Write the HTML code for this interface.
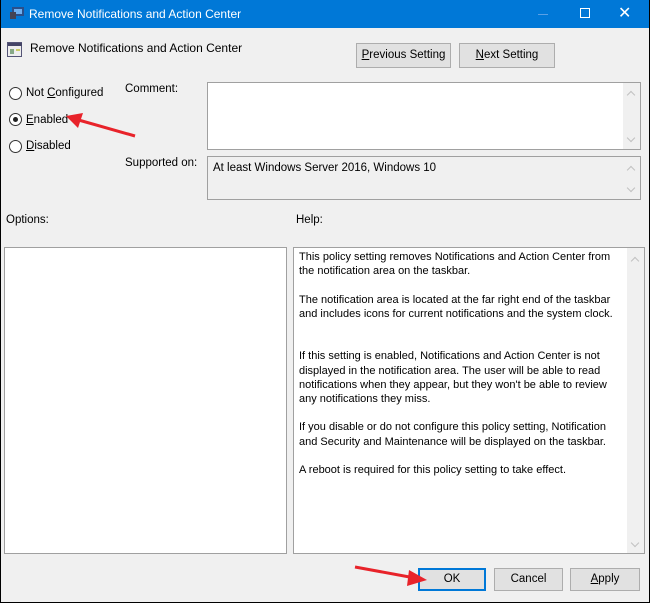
<!DOCTYPE html>
<html><head><style>
*{margin:0;padding:0;box-sizing:border-box}
body{width:650px;height:603px;background:#000;font-family:"Liberation Sans",sans-serif;font-size:11.5px;color:#000;position:relative;overflow:hidden}
.win{position:absolute;left:1px;top:0;width:648px;height:602px;background:#f0f0f0}
.title{position:absolute;left:0;top:0;width:648px;height:28px;background:#0078d7;color:#fff}
.a{position:absolute;white-space:nowrap}
.btn{position:absolute;background:#e1e1e1;border:1px solid #adadad;text-align:center;line-height:23px}
.box{position:absolute;background:#fff;border:1px solid #a0a0a0}
.ro{background:#f0f0f0}
.sb{position:absolute;right:0;top:0;bottom:0;width:17px;background:#f0f0f0}
.up,.dn{position:absolute;left:5px;width:6px;height:6px;border-left:1px solid #c0c0c0;border-top:1px solid #c0c0c0}
.up{transform:rotate(45deg)}
.dn{transform:rotate(225deg)}
.radio{position:absolute;width:13px;height:13px;border:1px solid #333;border-radius:50%;background:#fff}
u{text-decoration:underline}
</style></head><body>
<div class="win">
<div class="title">
 <svg class="a" style="left:8px;top:6px" width="16" height="14"><rect x="3" y="1" width="12" height="9" fill="#2b4f8a"/><rect x="5" y="3" width="8" height="5" fill="#6fb0f0"/><rect x="1" y="6" width="6" height="7" fill="#445"/></svg>
 <div class="a" style="left:28px;top:7px;font-size:12px">Remove Notifications and Action Center</div>
 <div class="a" style="left:537px;top:14px;width:10px;height:1px;background:#5aa0e6"></div>
 <div class="a" style="left:579px;top:8px;width:10px;height:10px;border:1px solid #fff"></div>
 <div class="a" style="left:617px;top:3px;font-size:16px">✕</div>
</div>
<svg class="a" style="left:6px;top:42px" width="16" height="16"><rect x="0.5" y="0.5" width="14" height="14" fill="#eee" stroke="#557"/><rect x="1" y="1" width="14" height="3" fill="#446"/><rect x="3" y="7" width="4" height="5" fill="#8a8"/><rect x="9" y="7" width="4" height="2" fill="#cc6"/></svg>
<div class="a" style="left:29px;top:41px;font-size:12px">Remove Notifications and Action Center</div>
<div class="btn" style="left:355px;top:43px;width:95px;height:25px"><u>P</u>revious Setting</div>
<div class="btn" style="left:458px;top:43px;width:96px;height:25px"><u>N</u>ext Setting</div>
<div class="radio" style="left:8px;top:87px"></div>
<div class="a" style="left:25px;top:87px">Not <u>C</u>onfigured</div>
<div class="radio" style="left:8px;top:113px"><div style="position:absolute;left:3px;top:3px;width:5px;height:5px;border-radius:50%;background:#222"></div></div>
<div class="a" style="left:25px;top:114px"><u>E</u>nabled</div>
<div class="radio" style="left:8px;top:140px"></div>
<div class="a" style="left:25px;top:140px"><u>D</u>isabled</div>
<svg class="a" style="left:62px;top:112px" width="75" height="28"><line x1="72" y1="24" x2="12" y2="7" stroke="#e8232a" stroke-width="3"/><polygon points="3,4 20,1 15,16" fill="#e8232a"/></svg>
<div class="a" style="left:124px;top:83px">Comment:</div>
<div class="box" style="left:206px;top:82px;width:434px;height:68px"><div class="sb"><div class="up" style="top:9px"></div><div class="dn" style="top:52px"></div></div></div>
<div class="a" style="left:124px;top:157px">Supported on:</div>
<div class="box ro" style="left:206px;top:156px;width:434px;height:44px"><div class="a" style="left:5px;top:5px">At least Windows Server 2016, Windows 10</div><div class="sb"><div class="up" style="top:10px"></div><div class="dn" style="top:28px"></div></div></div>
<div class="a" style="left:5px;top:214px">Options:</div>
<div class="a" style="left:295px;top:214px">Help:</div>
<div class="box" style="left:3px;top:247px;width:283px;height:307px"></div>
<div class="box" style="left:292px;top:247px;width:352px;height:307px">
<div class="sb"><div class="up" style="top:10px"></div><div class="dn" style="top:292px"></div></div>
<div class="a" style="left:5px;top:2px;line-height:14.2px;font-size:11px">This policy setting removes Notifications and Action Center from<br>the notification area on the taskbar.<br><br>The notification area is located at the far right end of the taskbar<br>and includes icons for current notifications and the system clock.<br><br><br>If this setting is enabled, Notifications and Action Center is not<br>displayed in the notification area. The user will be able to read<br>notifications when they appear, but they won't be able to review<br>any notifications they miss.<br><br>If you disable or do not configure this policy setting, Notification<br>and Security and Maintenance will be displayed on the taskbar.<br><br>A reboot is required for this policy setting to take effect.</div>
</div>
<div class="btn" style="left:417px;top:568px;width:68px;height:23px;border:2px solid #0078d7;line-height:19px">OK</div>
<div class="btn" style="left:493px;top:568px;width:69px;height:23px;line-height:21px">Cancel</div>
<div class="btn" style="left:569px;top:568px;width:70px;height:23px;line-height:21px"><u>A</u>pply</div>
<svg class="a" style="left:352px;top:564px" width="80" height="24"><line x1="2" y1="3" x2="62" y2="14" stroke="#e8232a" stroke-width="3"/><polygon points="74,16 56,6 54,22" fill="#e8232a"/></svg>
</div>
</body></html>
